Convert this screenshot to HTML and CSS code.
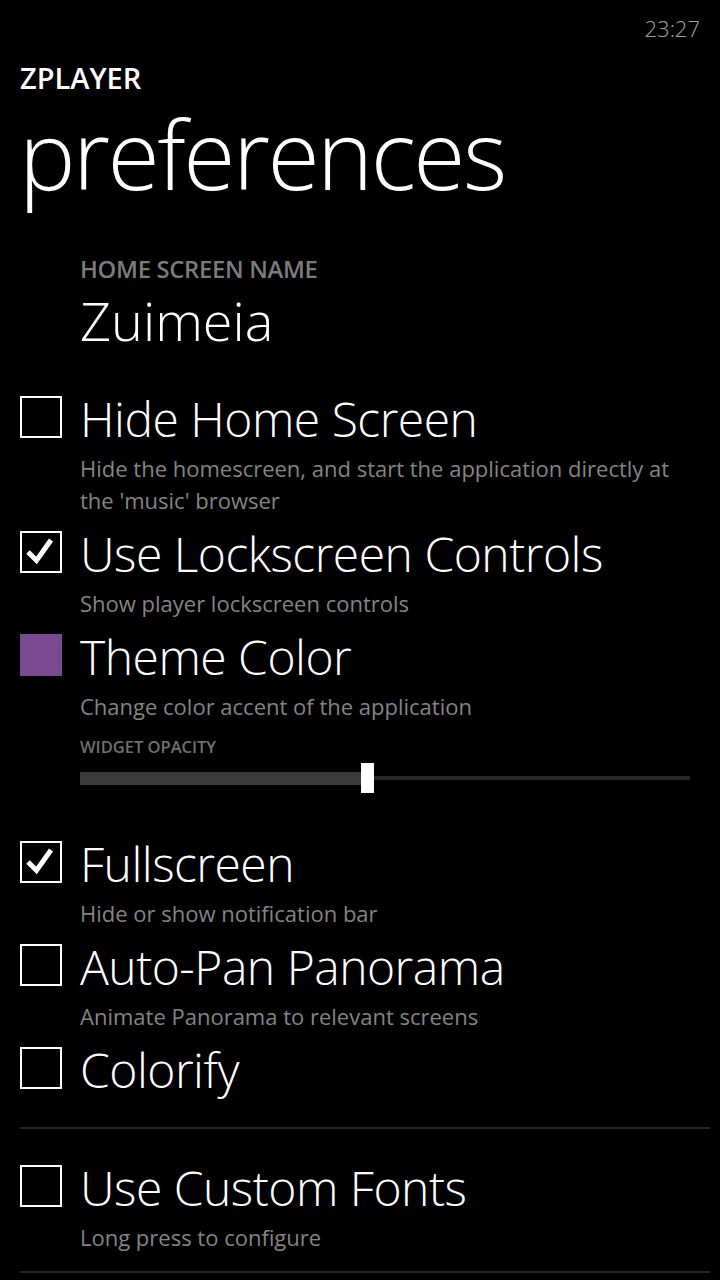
FILE: index.html
```html
<!DOCTYPE html>
<html lang="en">
<head>
  <meta charset="UTF-8" />
  <meta name="viewport" content="width=device-width, initial-scale=1.0"/>
  <title>zPlayer - preferences</title>
  <link rel="stylesheet" href="styles.css">
</head>
<body>
  <!-- Status bar -->
  <div class="status-bar">
    <span class="clock">23:27</span>
  </div>

  <!-- Page header -->
  <header class="page-head">
    <div class="app-name">ZPLAYER</div>
    <h1 class="page-title">preferences</h1>
  </header>

  <main class="prefs">
    <!-- Home screen name -->
    <section class="field">
      <div class="field-label">HOME SCREEN NAME</div>
      <div class="field-value">Zuimeia</div>
    </section>

    <div class="pref">
      <span class="box"></span>
      <div class="pref-text">
        <div class="pref-title">Hide Home Screen</div>
        <div class="pref-desc">Hide the homescreen, and start the application directly at the 'music' browser</div>
      </div>
    </div>

    <div class="pref">
      <span class="box checked">
        <svg viewBox="0 0 42 42" width="42" height="42"><path d="M8 21 L16.5 29.5 L31 9" /></svg>
      </span>
      <div class="pref-text">
        <div class="pref-title">Use Lockscreen Controls</div>
        <div class="pref-desc">Show player lockscreen controls</div>
      </div>
    </div>

    <div class="pref">
      <span class="swatch"></span>
      <div class="pref-text">
        <div class="pref-title">Theme Color</div>
        <div class="pref-desc">Change color accent of the application</div>
      </div>
    </div>

    <!-- Widget opacity slider -->
    <section class="slider-block">
      <div class="slider-label">WIDGET OPACITY</div>
      <div class="slider">
        <div class="slider-fill" style="width: 46%"></div>
        <div class="slider-thumb"></div>
        <div class="slider-track"></div>
      </div>
    </section>

    <div class="pref">
      <span class="box checked">
        <svg viewBox="0 0 42 42" width="42" height="42"><path d="M8 21 L16.5 29.5 L31 9" /></svg>
      </span>
      <div class="pref-text">
        <div class="pref-title">Fullscreen</div>
        <div class="pref-desc">Hide or show notification bar</div>
      </div>
    </div>

    <div class="pref">
      <span class="box"></span>
      <div class="pref-text">
        <div class="pref-title">Auto-Pan Panorama</div>
        <div class="pref-desc">Animate Panorama to relevant screens</div>
      </div>
    </div>

    <div class="pref no-desc">
      <span class="box"></span>
      <div class="pref-text">
        <div class="pref-title">Colorify</div>
      </div>
    </div>

    <hr class="divider">

    <div class="pref">
      <span class="box"></span>
      <div class="pref-text">
        <div class="pref-title">Use Custom Fonts</div>
        <div class="pref-desc">Long press to configure</div>
      </div>
    </div>

    <hr class="divider last">
  </main>
</body>
</html>
```

FILE: styles.css
```css
/* Reset & base styles */
* {
  margin: 0;
  padding: 0;
  box-sizing: border-box;
}
html, body {
  width: 100%;
  height: 100%;
  overflow: hidden;
  background: #000;
  color: #fff;
  font-family: "Open Sans", "Noto Sans", sans-serif;
}

/* Status bar */
.status-bar {
  display: flex;
  justify-content: flex-end;
  height: 48px;
  padding: 14px 20px 0 0;
}
.clock {
  font-size: 22px;
  line-height: 28px;
  font-weight: 300;
  color: #a3a3a3;
}

/* Page header */
.page-head {
  padding: 10px 0 0 20px;
}
.app-name {
  font-size: 29px;
  line-height: 40px;
  font-weight: 600;
}
.page-title {
  font-size: 95px;
  line-height: 110px;
  font-weight: 300;
  letter-spacing: -2.5px;
  margin-left: -1px;
}

/* Settings list */
.prefs {
  padding: 46px 10px 0 20px;
}

.field {
  padding-left: 60px;
  margin-bottom: 43px;
}
.field-label {
  font-size: 23.8px;
  line-height: 30px;
  font-weight: 600;
  color: #7c7c7c;
  letter-spacing: -0.3px;
}
.field-value {
  font-size: 54px;
  line-height: 66px;
  font-weight: 300;
  margin-top: 3px;
}

/* Checkbox rows */
.pref {
  display: flex;
  gap: 18px;
  margin-bottom: 15px;
}
.pref.no-desc {
  margin-bottom: 0;
}
.box {
  flex: none;
  width: 42px;
  height: 42px;
  border: 2px solid #fff;
}
.box svg {
  display: block;
  margin: -2px;
}
.box svg path {
  fill: none;
  stroke: #fff;
  stroke-width: 5;
}
.swatch {
  flex: none;
  width: 42px;
  height: 42px;
  background: #7a4a91;
}
.pref-text {
  flex: 1;
  margin-top: -8px;
}
.pref-title {
  font-size: 48px;
  line-height: 62px;
  font-weight: 300;
  letter-spacing: -0.5px;
}
.pref-desc {
  font-size: 22px;
  line-height: 32px;
  padding: 2px 20px 0 0;
  color: #848484;
}

/* Slider */
.slider-block {
  padding-left: 60px;
  margin: 15px 20px 48px 0;
}
.slider-label {
  font-size: 16.5px;
  line-height: 20px;
  font-weight: 600;
  color: #707070;
}
.slider {
  display: flex;
  align-items: center;
  height: 30px;
  margin-top: 6px;
}
.slider-fill {
  height: 13px;
  background: #3a3a3a;
}
.slider-thumb {
  flex: none;
  width: 13px;
  height: 30px;
  background: #fff;
}
.slider-track {
  flex: 1;
  height: 4px;
  background: #262626;
}

/* Dividers */
.divider {
  border: none;
  height: 2px;
  background: #262626;
  margin: 26px 0 36px;
}
.divider.last {
  margin-top: 18px;
}
```
